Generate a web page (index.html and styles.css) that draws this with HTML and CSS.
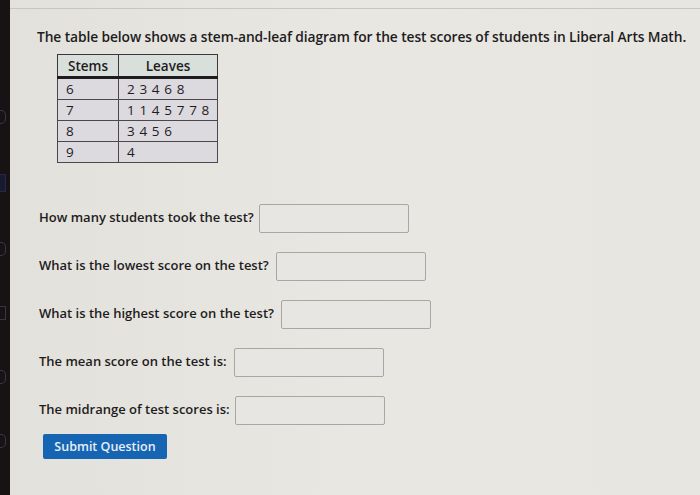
FILE: index.html
```html
<!DOCTYPE html>
<html>
<head>
<meta charset="utf-8">
<link rel="stylesheet" href="styles.css">
</head>
<body>
<div class="screen">
  <aside class="rail">
    <span class="rail-icon i1"></span>
    <span class="rail-icon i2"></span>
    <span class="rail-icon i3"></span>
    <span class="rail-icon i4"></span>
    <span class="rail-icon i5"></span>
    <span class="rail-icon i6"></span>
  </aside>
  <main class="page">
    <div class="topline"></div>
    <p class="intro">The table below shows a stem-and-leaf diagram for the test scores of students in Liberal Arts Math.</p>
    <table class="stem">
      <thead>
        <tr><th class="c1">Stems</th><th class="c2">Leaves</th></tr>
      </thead>
      <tbody>
        <tr><td>6</td><td>2 3 4 6 8</td></tr>
        <tr><td>7</td><td>1 1 4 5 7 7 8</td></tr>
        <tr><td>8</td><td>3 4 5 6</td></tr>
        <tr><td>9</td><td>4</td></tr>
      </tbody>
    </table>
    <div class="questions">
      <div class="q q1"><span>How many students took the test?</span><input type="text" class="box"></div>
      <div class="q q2"><span>What is the lowest score on the test?</span><input type="text" class="box"></div>
      <div class="q q3"><span>What is the highest score on the test?</span><input type="text" class="box"></div>
      <div class="q q4"><span>The mean score on the test is:</span><input type="text" class="box"></div>
      <div class="q q5"><span>The midrange of test scores is:</span><input type="text" class="box"></div>
    </div>
    <button class="submit">Submit Question</button>
  </main>
</div>
</body>
</html>
```

FILE: styles.css
```css
html, body {
  margin: 0;
  padding: 0;
  width: 700px;
  height: 495px;
  overflow: hidden;
  background: #e7e5e0;
}

.screen {
  display: flex;
  width: 700px;
  height: 495px;
  font-family: "Open Sans", "DejaVu Sans", sans-serif;
  color: #1e1c1e;
}

.rail {
  width: 10px;
  flex: none;
  background: #171315;
  display: flex;
  flex-direction: column;
  align-items: flex-start;
  padding-top: 110px;
  gap: 50px;
  overflow: hidden;
}

.rail-icon {
  width: 7px;
  height: 12px;
  border: 1px solid #4a4850;
  border-left: none;
  border-radius: 0 5px 5px 0;
  margin-left: -2px;
  opacity: 0.7;
}
.rail-icon.i2 { border-color: #2a3160; background: #1a1c3c; border-radius: 0; height: 16px; }
.rail-icon.i4 { border-radius: 0; }

.page {
  flex: 1;
  padding: 0 0 0 27px;
  background: linear-gradient(90deg, #e3e1db 0%, #e9e7e2 50%, #e8e6e1 100%);
}

.topline {
  height: 8px;
  border-bottom: 1px solid #c9c6c0;
  margin: 0 0 0 -27px;
}

.intro {
  margin: 19px 0 0 0;
  font-size: 13.8px;
  font-weight: 600;
  letter-spacing: -0.1px;
  line-height: 18px;
}

.stem {
  margin: 8px 0 0 20px;
  border-collapse: collapse;
  border: 1px solid #3a383c;
  font-size: 13.5px;
  font-weight: 500;
}

.stem th {
  height: 21px;
  background: #d9dfdb;
  font-weight: 600;
  font-size: 13.5px;
  border: 1px solid #3a383c;
  border-bottom: 3px solid #1e1c1e;
  padding: 0;
}
.stem th.c1 { width: 60px; text-align: center; }
.stem th.c2 { width: 98px; text-align: center; }

.stem td {
  height: 20px;
  background: #dcd9df;
  border: 1px solid #4a484c;
  padding: 0 0 0 8px;
  letter-spacing: 0.6px;
  line-height: 18px;
}

.questions {
  margin-top: 41px;
  display: flex;
  flex-direction: column;
  gap: 19px;
  padding-left: 2px;
}

.q {
  display: flex;
  align-items: center;
  gap: 5px;
  font-size: 13px;
  font-weight: 600;
  height: 29px;
}
.q span { padding-bottom: 4px; }

.box {
  width: 150px;
  height: 29px;
  box-sizing: border-box;
  border: 1px solid #a9a7a6;
  border-radius: 2px;
  background: #e8e6e2;
  margin: 0;
}

.q2 .box { margin-left: 2px; }
.q3 .box { margin-left: 2px; }
.q4 .box { margin-left: 2px; }

.submit {
  margin: 9px 0 0 6px;
  height: 25px;
  width: 124px;
  padding: 0;
  border: none;
  border-radius: 2px;
  background: #1565b3;
  color: #e8eef6;
  font-family: "Open Sans", "DejaVu Sans", sans-serif;
  font-size: 12.5px;
  font-weight: 600;
}
```
